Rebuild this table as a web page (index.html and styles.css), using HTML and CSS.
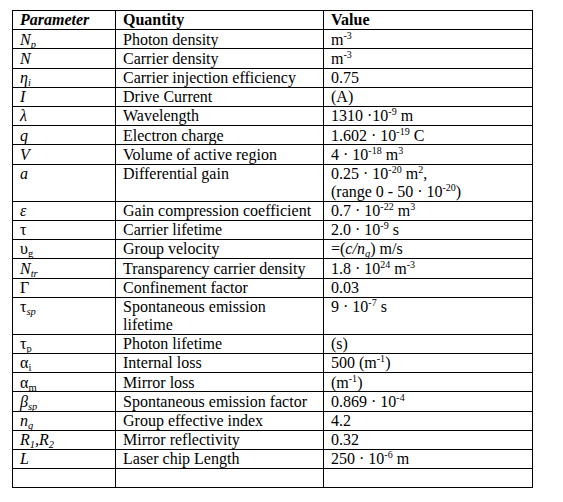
FILE: index.html
```html
<!DOCTYPE html>
<html>
<head>
<meta charset="utf-8">
<link rel="stylesheet" href="styles.css">
</head>
<body>
<table class="params">
  <colgroup>
    <col class="c1"><col class="c2"><col class="c3">
  </colgroup>
  <tr class="head">
    <td><b><i>Parameter</i></b></td>
    <td><b>Quantity</b></td>
    <td><b>Value</b></td>
  </tr>
  <tr><td><i>N<sub>p</sub></i></td><td>Photon density</td><td>m<sup>-3</sup></td></tr>
  <tr><td><i>N</i></td><td>Carrier density</td><td>m<sup>-3</sup></td></tr>
  <tr><td><i>η<sub>i</sub></i></td><td>Carrier injection efficiency</td><td>0.75</td></tr>
  <tr><td><i>I</i></td><td>Drive Current</td><td>(A)</td></tr>
  <tr><td><i>λ</i></td><td>Wavelength</td><td>1310 ·10<sup>-9</sup> m</td></tr>
  <tr><td><i>q</i></td><td>Electron charge</td><td>1.602 · 10<sup>-19</sup> C</td></tr>
  <tr><td><i>V</i></td><td>Volume of active region</td><td>4 · 10<sup>-18</sup> m<sup>3</sup></td></tr>
  <tr><td><i>a</i></td><td>Differential gain</td><td>0.25 · 10<sup>-20</sup> m<sup>2</sup>,<br>(range 0 - 50 · 10<sup>-20</sup>)</td></tr>
  <tr><td><i>ε</i></td><td>Gain compression coefficient</td><td>0.7 · 10<sup>-22</sup> m<sup>3</sup></td></tr>
  <tr><td>τ</td><td>Carrier lifetime</td><td>2.0 · 10<sup>-9</sup> s</td></tr>
  <tr><td>υ<sub>g</sub></td><td>Group velocity</td><td>=(<i>c/n<sub>g</sub></i>) m/s</td></tr>
  <tr><td><i>N<sub>tr</sub></i></td><td>Transparency carrier density</td><td>1.8 · 10<sup>24</sup> m<sup>-3</sup></td></tr>
  <tr><td>Γ</td><td>Confinement factor</td><td>0.03</td></tr>
  <tr><td>τ<i><sub>sp</sub></i></td><td>Spontaneous emission<br>lifetime</td><td>9 · 10<sup>-7</sup> s</td></tr>
  <tr><td>τ<sub>p</sub></td><td>Photon lifetime</td><td>(s)</td></tr>
  <tr><td>α<sub>i</sub></td><td>Internal loss</td><td>500 (m<sup>-1</sup>)</td></tr>
  <tr><td>α<sub>m</sub></td><td>Mirror loss</td><td>(m<sup>-1</sup>)</td></tr>
  <tr><td><i>β<sub>sp</sub></i></td><td>Spontaneous emission factor</td><td>0.869 · 10<sup>-4</sup></td></tr>
  <tr><td><i>n<sub>g</sub></i></td><td>Group effective index</td><td>4.2</td></tr>
  <tr><td><i>R<sub>1</sub>,R<sub>2</sub></i></td><td>Mirror reflectivity</td><td>0.32</td></tr>
  <tr><td><i>L</i></td><td>Laser chip Length</td><td>250 · 10<sup>-6</sup> m</td></tr>
  <tr><td>&nbsp;</td><td>&nbsp;</td><td>&nbsp;</td></tr>
</table>
</body>
</html>
```

FILE: styles.css
```css
html, body {
  margin: 0;
  padding: 0;
  background: #ffffff;
}
body {
  padding: 10px 0 0 12px;
  font-family: "Liberation Serif", "Times New Roman", serif;
  font-size: 16px;
  color: #000;
}
.params {
  border-collapse: collapse;
  table-layout: fixed;
  width: 520px;
}
.c1 { width: 103px; }
.c2 { width: 208px; }
.c3 { width: 209px; }
.params td {
  border: 1px solid #000;
  padding: 0.3px 4px 0 7px;
  line-height: 17.9px;
  vertical-align: top;
  white-space: nowrap;
  overflow: hidden;
}
.params sup {
  font-size: 10px;
  line-height: 0;
  vertical-align: 6px;
}
.params sub {
  font-size: 10.5px;
  line-height: 0;
  vertical-align: -3px;
}
```
